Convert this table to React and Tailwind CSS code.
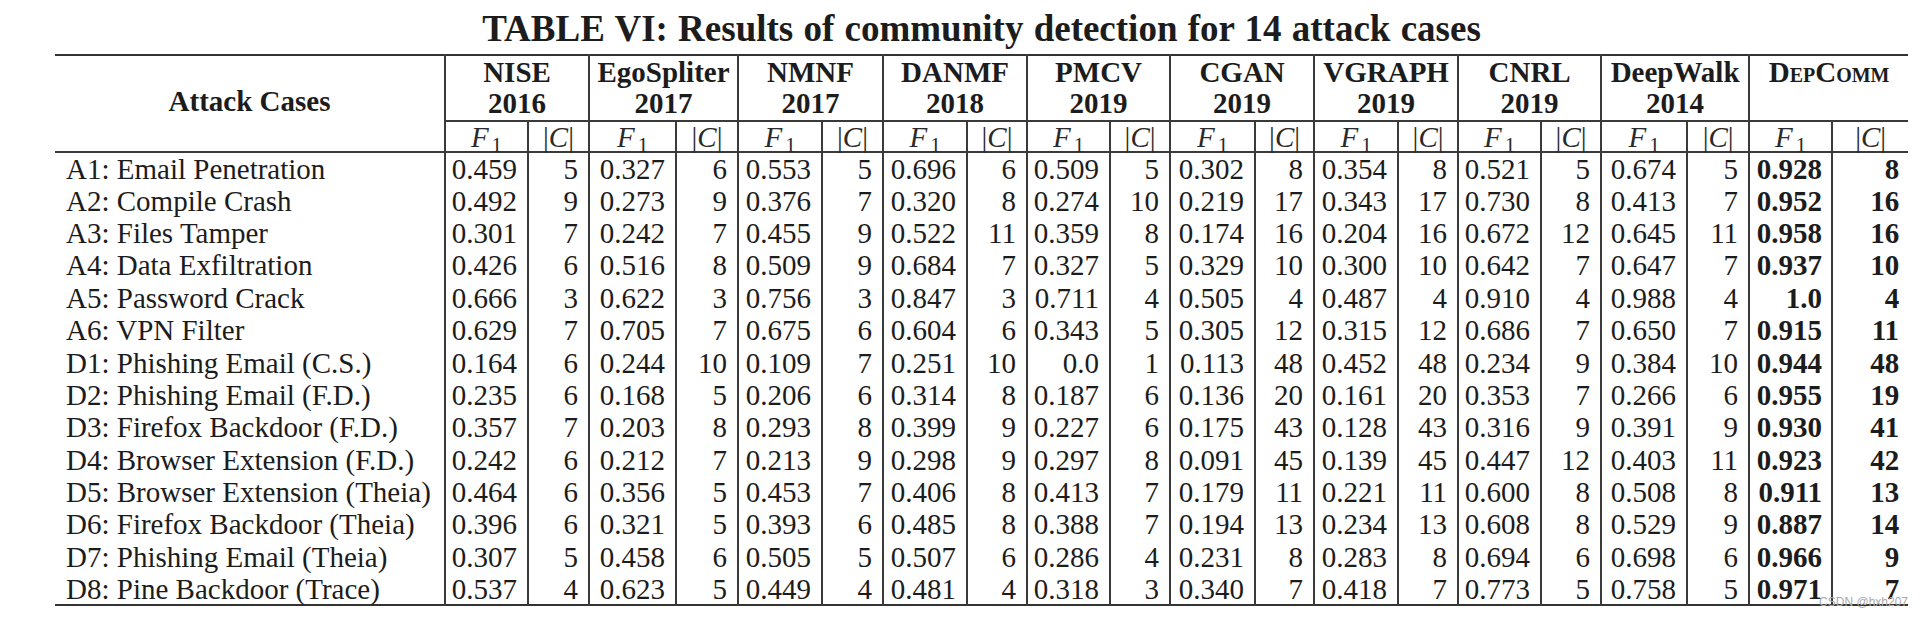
import React from "react";

const methods = [
  { name: "NISE", year: "2016" },
  { name: "EgoSpliter", year: "2017" },
  { name: "NMNF", year: "2017" },
  { name: "DANMF", year: "2018" },
  { name: "PMCV", year: "2019" },
  { name: "CGAN", year: "2019" },
  { name: "VGRAPH", year: "2019" },
  { name: "CNRL", year: "2019" },
  { name: "DeepWalk", year: "2014" },
];

const rows = [
  ["A1: Email Penetration", "0.459", "5", "0.327", "6", "0.553", "5", "0.696", "6", "0.509", "5", "0.302", "8", "0.354", "8", "0.521", "5", "0.674", "5", "0.928", "8"],
  ["A2: Compile Crash", "0.492", "9", "0.273", "9", "0.376", "7", "0.320", "8", "0.274", "10", "0.219", "17", "0.343", "17", "0.730", "8", "0.413", "7", "0.952", "16"],
  ["A3: Files Tamper", "0.301", "7", "0.242", "7", "0.455", "9", "0.522", "11", "0.359", "8", "0.174", "16", "0.204", "16", "0.672", "12", "0.645", "11", "0.958", "16"],
  ["A4: Data Exfiltration", "0.426", "6", "0.516", "8", "0.509", "9", "0.684", "7", "0.327", "5", "0.329", "10", "0.300", "10", "0.642", "7", "0.647", "7", "0.937", "10"],
  ["A5: Password Crack", "0.666", "3", "0.622", "3", "0.756", "3", "0.847", "3", "0.711", "4", "0.505", "4", "0.487", "4", "0.910", "4", "0.988", "4", "1.0", "4"],
  ["A6: VPN Filter", "0.629", "7", "0.705", "7", "0.675", "6", "0.604", "6", "0.343", "5", "0.305", "12", "0.315", "12", "0.686", "7", "0.650", "7", "0.915", "11"],
  ["D1: Phishing Email (C.S.)", "0.164", "6", "0.244", "10", "0.109", "7", "0.251", "10", "0.0", "1", "0.113", "48", "0.452", "48", "0.234", "9", "0.384", "10", "0.944", "48"],
  ["D2: Phishing Email (F.D.)", "0.235", "6", "0.168", "5", "0.206", "6", "0.314", "8", "0.187", "6", "0.136", "20", "0.161", "20", "0.353", "7", "0.266", "6", "0.955", "19"],
  ["D3: Firefox Backdoor (F.D.)", "0.357", "7", "0.203", "8", "0.293", "8", "0.399", "9", "0.227", "6", "0.175", "43", "0.128", "43", "0.316", "9", "0.391", "9", "0.930", "41"],
  ["D4: Browser Extension (F.D.)", "0.242", "6", "0.212", "7", "0.213", "9", "0.298", "9", "0.297", "8", "0.091", "45", "0.139", "45", "0.447", "12", "0.403", "11", "0.923", "42"],
  ["D5: Browser Extension (Theia)", "0.464", "6", "0.356", "5", "0.453", "7", "0.406", "8", "0.413", "7", "0.179", "11", "0.221", "11", "0.600", "8", "0.508", "8", "0.911", "13"],
  ["D6: Firefox Backdoor (Theia)", "0.396", "6", "0.321", "5", "0.393", "6", "0.485", "8", "0.388", "7", "0.194", "13", "0.234", "13", "0.608", "8", "0.529", "9", "0.887", "14"],
  ["D7: Phishing Email (Theia)", "0.307", "5", "0.458", "6", "0.505", "5", "0.507", "6", "0.286", "4", "0.231", "8", "0.283", "8", "0.694", "6", "0.698", "6", "0.966", "9"],
  ["D8: Pine Backdoor (Trace)", "0.537", "4", "0.623", "5", "0.449", "4", "0.481", "4", "0.318", "3", "0.340", "7", "0.418", "7", "0.773", "5", "0.758", "5", "0.971", "7"],
];

function F1() {
  return (
    <span className="whitespace-nowrap">
      <span className="italic pr-[3px]">F</span>
      <sub className="not-italic text-[21px]">1</sub>
    </span>
  );
}

function CSize() {
  return (
    <span className="whitespace-nowrap">
      |<span className="italic">C</span>|
    </span>
  );
}

export default function App() {
  const methodCols = [...methods.map((m) => m.name), "DepComm"];

  return (
    <div className="w-[1922px] h-[618px] bg-white text-[#1c1c1c] font-['Liberation_Serif',serif] overflow-hidden">
      <div className="relative ml-[55px] w-[1853px]">
        <div className="h-[54px] pt-[7px] text-center text-[37px] leading-[44px] font-bold [word-spacing:1px]">
          TABLE VI: Results of community detection for 14 attack cases
        </div>

        <table className="table-fixed border-collapse w-[1853px] text-[29px]">
          <colgroup>
            <col className="w-[390px]" />
            <col className="w-[83px]" />
            <col className="w-[61px]" />
            <col className="w-[87px]" />
            <col className="w-[62px]" />
            <col className="w-[84px]" />
            <col className="w-[61px]" />
            <col className="w-[84px]" />
            <col className="w-[60px]" />
            <col className="w-[83px]" />
            <col className="w-[60px]" />
            <col className="w-[85px]" />
            <col className="w-[59px]" />
            <col className="w-[84px]" />
            <col className="w-[60px]" />
            <col className="w-[83px]" />
            <col className="w-[60px]" />
            <col className="w-[86px]" />
            <col className="w-[62px]" />
            <col className="w-[83px]" />
            <col className="w-[76px]" />
          </colgroup>
          <thead>
            <tr className="h-[66px] border-t-2 border-[#333]">
              <th
                rowSpan={2}
                className="border-b-2 border-[#3a3a3a] font-bold leading-[32px] text-center align-middle pb-[6px]"
              >
                Attack Cases
              </th>
              {methods.map((m) => (
                <th
                  key={m.name}
                  colSpan={2}
                  className="border-l-2 border-b-2 border-[#3a3a3a] font-bold leading-[31px] text-center align-middle px-0"
                >
                  {m.name}
                  <br />
                  {m.year}
                </th>
              ))}
              <th
                colSpan={2}
                className="border-l-2 border-b-2 border-[#3a3a3a] font-bold leading-[31px] text-center align-middle [font-variant:small-caps]"
              >
                DepComm
                <br />
                &nbsp;
              </th>
            </tr>
            <tr className="h-[31px]">
              {methodCols.map((name) => (
                <React.Fragment key={name}>
                  <th className="border-l-2 border-b-2 border-[#3a3a3a] font-normal text-[#2a2a2a] leading-[28px] text-center">
                    <F1 />
                  </th>
                  <th className="border-l-2 border-b-2 border-[#3a3a3a] font-normal text-[#2a2a2a] leading-[28px] text-center">
                    <CSize />
                  </th>
                </React.Fragment>
              ))}
            </tr>
          </thead>
          <tbody>
            {rows.map((r, ri) => (
              <tr
                key={r[0]}
                className={
                  ri === rows.length - 1
                    ? "h-[32.4px] border-b-2 border-[#333]"
                    : "h-[32.4px]"
                }
              >
                <td className="pl-[11px] leading-[30px] whitespace-nowrap">{r[0]}</td>
                {r.slice(1).map((v, i) => (
                  <td
                    key={i}
                    className={
                      i >= 18
                        ? "border-l-2 border-[#3a3a3a] text-right pr-[9px] leading-[30px] font-bold"
                        : "border-l-2 border-[#3a3a3a] text-right pr-[10px] leading-[30px]"
                    }
                  >
                    {v}
                  </td>
                ))}
              </tr>
            ))}
          </tbody>
        </table>

        <div className="absolute right-[0px] top-[595px] text-[12px] leading-[14px] text-[#a9a9a9] font-['Liberation_Sans',sans-serif]">
          CSDN @hxh207
        </div>
      </div>
    </div>
  );
}
